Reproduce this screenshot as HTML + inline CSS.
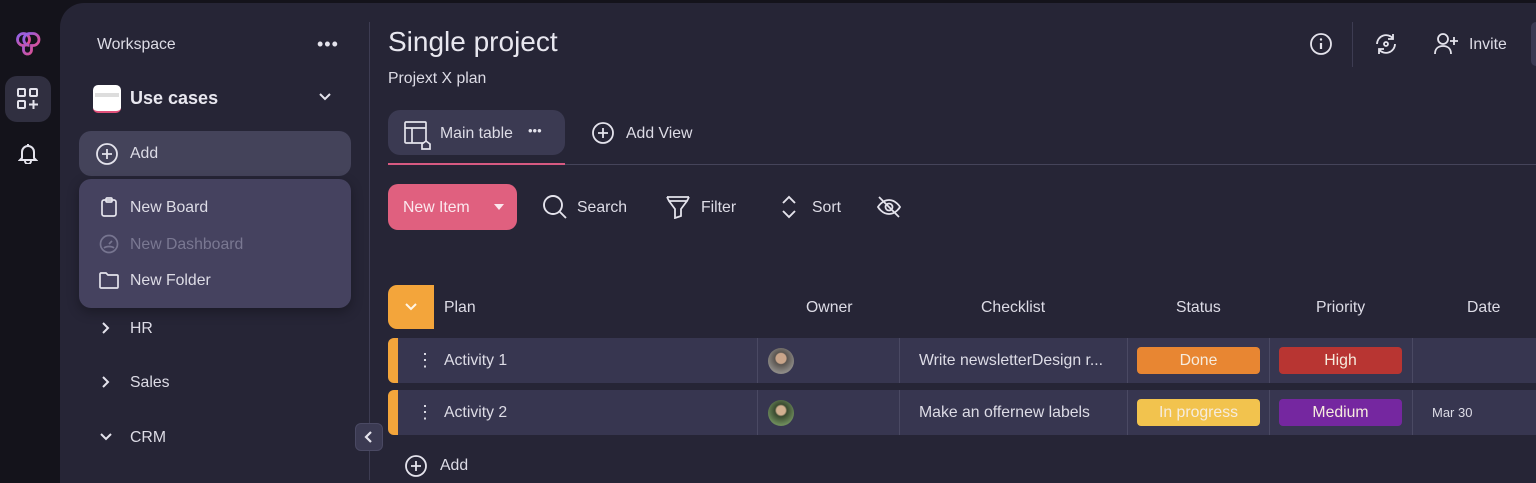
<!DOCTYPE html>
<html><head><meta charset="utf-8"><style>
*{box-sizing:border-box;margin:0;padding:0}
body{width:1536px;height:480px;overflow:hidden;background:#14131b;font-family:"Liberation Sans",sans-serif;color:#e4e3ec;position:relative}
.a{position:absolute}
svg{display:block}
.panel{left:60px;top:3px;width:1480px;height:480px;background:#262536;border-top-left-radius:24px}
.t{font-size:15.8px;color:#dddce6}
.cell{position:absolute;top:0;height:45px;display:flex;align-items:center;border-right:1px solid #4a4963}
.row{position:absolute;left:388px;width:1148px;height:45px;background:#373650;border-radius:6px 0 0 6px;overflow:hidden}
.pill{height:27px;border-radius:4px;display:flex;align-items:center;justify-content:center;font-size:15.8px;color:#f6ecde}
</style></head><body>
<div class="a panel"></div>
<!-- rail -->
<svg class="a" style="left:15px;top:31px" width="26" height="26" viewBox="0 0 26 26"><defs><linearGradient id="g" x1="0" y1="0" x2="1" y2="1"><stop offset="0" stop-color="#8a63f0"/><stop offset="1" stop-color="#f04a7a"/></linearGradient></defs><circle cx="8.5" cy="8.5" r="6" fill="none" stroke="url(#g)" stroke-width="2.8"/><path d="M8.5 14.5V19a4 4 0 0 0 8 0v-4.5H18a6 6 0 0 0 0-12h-3a6 6 0 0 0-0.5 12" fill="none" stroke="url(#g)" stroke-width="2.8"/></svg>
<div class="a" style="left:5px;top:76px;width:46px;height:46px;border-radius:12px;background:#302f40"></div>
<svg class="a" style="left:17px;top:88px" width="22" height="22" viewBox="0 0 22 22" fill="none" stroke="#e4e3ec" stroke-width="2"><rect x="1" y="1" width="7" height="7" rx="1"/><rect x="13" y="1" width="7" height="7" rx="1"/><rect x="1" y="13" width="7" height="7" rx="1"/><path d="M16.5 12v9M12 16.5h9"/></svg>
<svg class="a" style="left:18px;top:142px" width="20" height="22" viewBox="0 0 20 22" fill="none" stroke="#e4e3ec" stroke-width="2"><path d="M10 2v2M4 16V10a6 6 0 0 1 12 0v6l2 2H2zM7 19a3 3 0 0 0 6 0"/></svg>
<!-- sidebar -->
<div class="a t" style="left:97px;top:36px">Workspace</div>
<div class="a" style="left:317px;top:34px;font-size:18px;letter-spacing:1px;color:#e4e3ec">•••</div>
<div class="a" style="left:93px;top:85px;width:28px;height:28px;border-radius:5px;background:#fff;border-bottom:2px solid #e0507a"><div style="margin:8px 2px;height:4px;background:#ddd"></div></div>
<div class="a" style="left:130px;top:88px;font-size:18px;font-weight:bold;color:#e8e7ef">Use cases</div>
<svg class="a" style="left:318px;top:92px" width="14" height="10" viewBox="0 0 14 10" fill="none" stroke="#e4e3ec" stroke-width="2"><path d="M2 2l5 5 5-5"/></svg>
<div class="a" style="left:79px;top:131px;width:272px;height:45px;border-radius:12px;background:#44435a"></div>
<svg class="a" style="left:95px;top:142px" width="24" height="24" viewBox="0 0 24 24" fill="none" stroke="#e4e3ec" stroke-width="1.8"><circle cx="12" cy="12" r="10"/><path d="M12 7v10M7 12h10"/></svg>
<div class="a t" style="left:130px;top:145px">Add</div>
<div class="a" style="left:79px;top:179px;width:272px;height:129px;border-radius:12px;background:#45425f;box-shadow:0 4px 12px rgba(0,0,0,.3)"></div>
<svg class="a" style="left:100px;top:197px" width="18" height="20" viewBox="0 0 18 20" fill="none" stroke="#e4e3ec" stroke-width="1.7"><rect x="2" y="3" width="14" height="16" rx="2"/><rect x="6" y="1" width="6" height="4" rx="1"/></svg>
<div class="a t" style="left:130px;top:199px">New Board</div>
<svg class="a" style="left:99px;top:234px" width="20" height="20" viewBox="0 0 20 20" fill="none" stroke="#777590" stroke-width="1.7"><circle cx="10" cy="10" r="8.5"/><path d="M10 10l3-3M5 14c2-2 8-2 10 0"/></svg>
<div class="a t" style="left:130px;top:236px;color:#7a7892">New Dashboard</div>
<svg class="a" style="left:99px;top:271px" width="20" height="18" viewBox="0 0 20 18" fill="none" stroke="#e4e3ec" stroke-width="1.7"><path d="M1 3a1 1 0 0 1 1-1h5l2 2h9a1 1 0 0 1 1 1v11a1 1 0 0 1-1 1H2a1 1 0 0 1-1-1z"/></svg>
<div class="a t" style="left:130px;top:272px">New Folder</div>
<svg class="a" style="left:101px;top:321px" width="10" height="14" viewBox="0 0 10 14" fill="none" stroke="#e4e3ec" stroke-width="2"><path d="M2 2l5 5-5 5"/></svg>
<div class="a t" style="left:130px;top:320px">HR</div>
<svg class="a" style="left:101px;top:375px" width="10" height="14" viewBox="0 0 10 14" fill="none" stroke="#e4e3ec" stroke-width="2"><path d="M2 2l5 5-5 5"/></svg>
<div class="a t" style="left:130px;top:374px">Sales</div>
<svg class="a" style="left:99px;top:432px" width="14" height="10" viewBox="0 0 14 10" fill="none" stroke="#e4e3ec" stroke-width="2"><path d="M2 2l5 5 5-5"/></svg>
<div class="a t" style="left:130px;top:429px">CRM</div>
<div class="a" style="left:369px;top:22px;width:1px;height:458px;background:#3d3c52"></div>
<div class="a" style="left:355px;top:423px;width:28px;height:28px;border-radius:6px;background:#3b3a52;border:1px solid #4a4963"></div>
<svg class="a" style="left:364px;top:430px" width="10" height="14" viewBox="0 0 10 14" fill="none" stroke="#e4e3ec" stroke-width="2.2"><path d="M7 2L2 7l5 5"/></svg>
<!-- header -->
<div class="a" style="left:388px;top:26px;font-size:28px;color:#e8e7ef">Single project</div>
<div class="a t" style="left:388px;top:70px">Projext X plan</div>
<svg class="a" style="left:1309px;top:32px" width="24" height="24" viewBox="0 0 24 24" fill="none" stroke="#e4e3ec" stroke-width="1.8"><circle cx="12" cy="12" r="10"/><path d="M12 11v6" stroke-width="2.2"/><circle cx="12" cy="7.5" r="1.2" fill="#e4e3ec" stroke="none"/></svg>
<div class="a" style="left:1352px;top:22px;width:1px;height:45px;background:#3d3c52"></div>
<svg class="a" style="left:1373px;top:31px" width="26" height="26" viewBox="0 0 26 26" fill="none" stroke="#e4e3ec" stroke-width="1.8"><path d="M4 13a9 9 0 0 1 16-5.5M22 13a9 9 0 0 1-16 5.5M20 3v5h-5M6 23v-5h5"/><circle cx="13" cy="13" r="2"/></svg>
<svg class="a" style="left:1434px;top:32px" width="26" height="24" viewBox="0 0 26 24" fill="none" stroke="#e4e3ec" stroke-width="1.8"><circle cx="9" cy="7" r="5"/><path d="M1 22c0-5 3-8 8-8s8 3 8 8M20 5v8M16 9h8"/></svg>
<div class="a t" style="left:1469px;top:36px">Invite</div>
<div class="a" style="left:1531px;top:22px;width:10px;height:44px;border-radius:6px;background:#3b3a52"></div>
<!-- tabs -->
<div class="a" style="left:388px;top:110px;width:177px;height:45px;border-radius:12px;background:#3b3a52"></div>
<svg class="a" style="left:404px;top:121px" width="32" height="30" viewBox="0 0 32 30" fill="none" stroke="#e4e3ec" stroke-width="1.7"><rect x="1" y="1" width="21" height="21" rx="1"/><path d="M1 7h21M8 7v15"/><path d="M18 28v-5l4-3 4 3v5z" fill="#3b3a52"/></svg>
<div class="a t" style="left:440px;top:125px">Main table</div>
<div class="a" style="left:528px;top:123px;font-size:13px;color:#e4e3ec">•••</div>
<svg class="a" style="left:591px;top:121px" width="24" height="24" viewBox="0 0 24 24" fill="none" stroke="#e4e3ec" stroke-width="1.8"><circle cx="12" cy="12" r="10"/><path d="M12 7v10M7 12h10"/></svg>
<div class="a t" style="left:626px;top:125px">Add View</div>
<div class="a" style="left:388px;top:164px;width:1148px;height:1px;background:#45445a"></div>
<div class="a" style="left:388px;top:163px;width:177px;height:2px;background:#d85a82"></div>
<!-- toolbar -->
<div class="a" style="left:388px;top:184px;width:129px;height:46px;border-radius:10px;background:#e0607f"></div>
<div class="a t" style="left:403px;top:199px;color:#fbe8ee">New Item</div>
<div class="a" style="left:494px;top:204px;border:5px solid transparent;border-top:6px solid #fbe8ee;border-bottom:0"></div>
<svg class="a" style="left:542px;top:194px" width="26" height="26" viewBox="0 0 26 26" fill="none" stroke="#e4e3ec" stroke-width="1.9"><circle cx="11" cy="11" r="9"/><path d="M17.5 17.5L24 24"/></svg>
<div class="a t" style="left:577px;top:199px">Search</div>
<svg class="a" style="left:666px;top:195px" width="24" height="24" viewBox="0 0 24 24" fill="none" stroke="#e4e3ec" stroke-width="1.8"><path d="M1 2h22M1 2l2 4h18l2-4M3 6l6 8v9l6-2v-7l6-8"/></svg>
<div class="a t" style="left:701px;top:199px">Filter</div>
<svg class="a" style="left:780px;top:195px" width="18" height="24" viewBox="0 0 18 24" fill="none" stroke="#e4e3ec" stroke-width="1.9"><path d="M3 8l6-6 6 6M3 16l6 6 6-6"/></svg>
<div class="a t" style="left:812px;top:199px">Sort</div>
<svg class="a" style="left:876px;top:194px" width="26" height="26" viewBox="0 0 26 26" fill="none" stroke="#e4e3ec" stroke-width="1.8"><path d="M2 13s4-7 11-7 11 7 11 7-4 7-11 7S2 13 2 13z"/><circle cx="13" cy="13" r="3.5"/><path d="M3 3l20 20"/></svg>
<!-- table header -->
<div class="a" style="left:388px;top:285px;width:46px;height:44px;border-radius:9px 0 0 9px;background:#f3a53b"></div>
<svg class="a" style="left:404px;top:302px" width="14" height="10" viewBox="0 0 14 10" fill="none" stroke="#fff5e6" stroke-width="2"><path d="M2 2l5 5 5-5"/></svg>
<div class="a t" style="left:444px;top:299px">Plan</div>
<div class="a t" style="left:806px;top:299px">Owner</div>
<div class="a t" style="left:981px;top:299px">Checklist</div>
<div class="a t" style="left:1176px;top:299px">Status</div>
<div class="a t" style="left:1316px;top:299px">Priority</div>
<div class="a t" style="left:1467px;top:299px">Date</div>
<!-- rows -->
<div class="row" style="top:338px">
 <div class="a" style="left:0;top:0;width:10px;height:45px;background:#f3a53b"></div>
 <div class="cell" style="left:10px;width:360px"><span class="a" style="left:18px;top:13px;font-size:18px;line-height:1">⋮</span><span class="a t" style="left:46px;top:14px">Activity 1</span></div>
 <div class="cell" style="left:370px;width:142px"><div style="margin-left:10px;width:26px;height:26px;border-radius:50%;background:radial-gradient(circle at 50% 40%,#c9a58a 0 25%,#5a5550 30%,#8d8a86 70%)"></div></div>
 <div class="cell" style="left:512px;width:228px"><span class="t" style="margin-left:19px;white-space:nowrap">Write newsletterDesign r...</span></div>
 <div class="cell" style="left:740px;width:142px"><div class="pill" style="margin-left:9px;width:123px;background:#e88632">Done</div></div>
 <div class="cell" style="left:882px;width:143px"><div class="pill" style="margin-left:9px;width:123px;background:#b83532">High</div></div>
</div>
<div class="row" style="top:390px">
 <div class="a" style="left:0;top:0;width:10px;height:45px;background:#f3a53b"></div>
 <div class="cell" style="left:10px;width:360px"><span class="a" style="left:18px;top:13px;font-size:18px;line-height:1">⋮</span><span class="a t" style="left:46px;top:14px">Activity 2</span></div>
 <div class="cell" style="left:370px;width:142px"><div style="margin-left:10px;width:26px;height:26px;border-radius:50%;background:radial-gradient(circle at 50% 40%,#d2b090 0 22%,#3a4a30 30%,#6c8a5a 70%)"></div></div>
 <div class="cell" style="left:512px;width:228px"><span class="t" style="margin-left:19px">Make an offernew labels</span></div>
 <div class="cell" style="left:740px;width:142px"><div class="pill" style="margin-left:9px;width:123px;background:#f2c34e">In progress</div></div>
 <div class="cell" style="left:882px;width:143px"><div class="pill" style="margin-left:9px;width:123px;background:#7527a0">Medium</div></div>
 <div class="a" style="left:1044px;top:15px;font-size:13px;color:#dddce6">Mar 30</div>
</div>
<svg class="a" style="left:404px;top:454px" width="24" height="24" viewBox="0 0 24 24" fill="none" stroke="#e4e3ec" stroke-width="1.8"><circle cx="12" cy="12" r="10"/><path d="M12 7v10M7 12h10"/></svg>
<div class="a t" style="left:440px;top:457px">Add</div>
</body></html>
